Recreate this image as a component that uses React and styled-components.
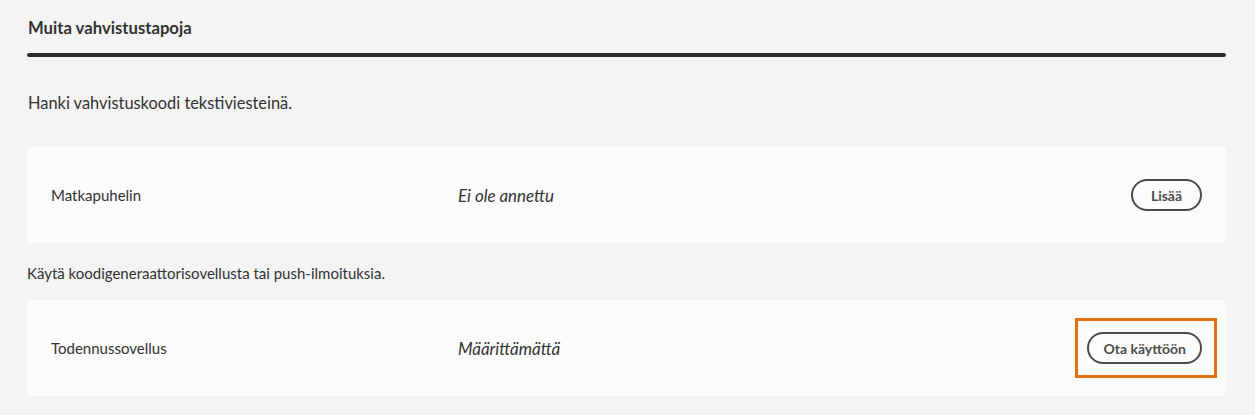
import React from "react";
import styled, { createGlobalStyle } from "styled-components";

const GlobalStyle = createGlobalStyle`
  body {
    margin: 0;
    background-color: #f4f4f4;
    font-family: Lato, "Open Sans", "Liberation Sans", sans-serif;
    color: #2c2c2c;
  }
`;

const Page = styled.div`
  padding: 18px 29px 0 27px;
`;

const Title = styled.h2`
  margin: 0;
  font-size: 16.7px;
  line-height: 20px;
  font-weight: 700;
  color: #323232;
  padding-left: 1px;
`;

const Divider = styled.div`
  margin-top: 15px;
  height: 4px;
  border-radius: 2px;
  background-color: #2c2c2c;
`;

const Intro = styled.p`
  margin: 34px 0 0 1px;
  font-size: 16.4px;
  line-height: 24px;
  color: #323232;
`;

const Hint = styled.p`
  margin: 20px 0 0;
  font-size: 15px;
  line-height: 20px;
  color: #323232;
`;

const Card = styled.div`
  display: grid;
  grid-template-columns: 407px 1fr auto;
  align-items: center;
  height: 96px;
  box-sizing: border-box;
  padding: 0 24px;
  margin-top: ${(p) => p.$gap}px;
  background-color: #fbfbfb;
  border-radius: 4px;
`;

const Label = styled.span`
  font-size: 15px;
  color: #323232;
`;

const Value = styled.span`
  font-size: 16.9px;
  font-style: italic;
  color: #323232;
`;

const Highlight = styled.div`
  position: relative;

  &::after {
    content: "";
    position: absolute;
    top: -14px;
    bottom: -14px;
    left: -12px;
    right: -15px;
    border: 3px solid #e3700f;
    pointer-events: none;
  }
`;

const Button = styled.button`
  height: 32px;
  min-width: 71px;
  box-sizing: border-box;
  padding: 0 14px;
  border: 2px solid #4b4b4b;
  border-radius: 16px;
  background: transparent;
  font-family: inherit;
  font-size: 14px;
  font-weight: 700;
  color: #4b4b4b;
  cursor: pointer;
`;

const App = () => {
  return (
    <>
      <GlobalStyle />
      <Page>
        <Title>Muita vahvistustapoja</Title>
        <Divider />
        <Intro>Hanki vahvistuskoodi tekstiviesteinä.</Intro>

        <Card $gap={32}>
          <Label>Matkapuhelin</Label>
          <Value>Ei ole annettu</Value>
          <Button>Lisää</Button>
        </Card>

        <Hint>Käytä koodigeneraattorisovellusta tai push-ilmoituksia.</Hint>

        <Card $gap={17}>
          <Label>Todennussovellus</Label>
          <Value>Määrittämättä</Value>
          <Highlight>
            <Button>Ota käyttöön</Button>
          </Highlight>
        </Card>
      </Page>
    </>
  );
};

export default App;
